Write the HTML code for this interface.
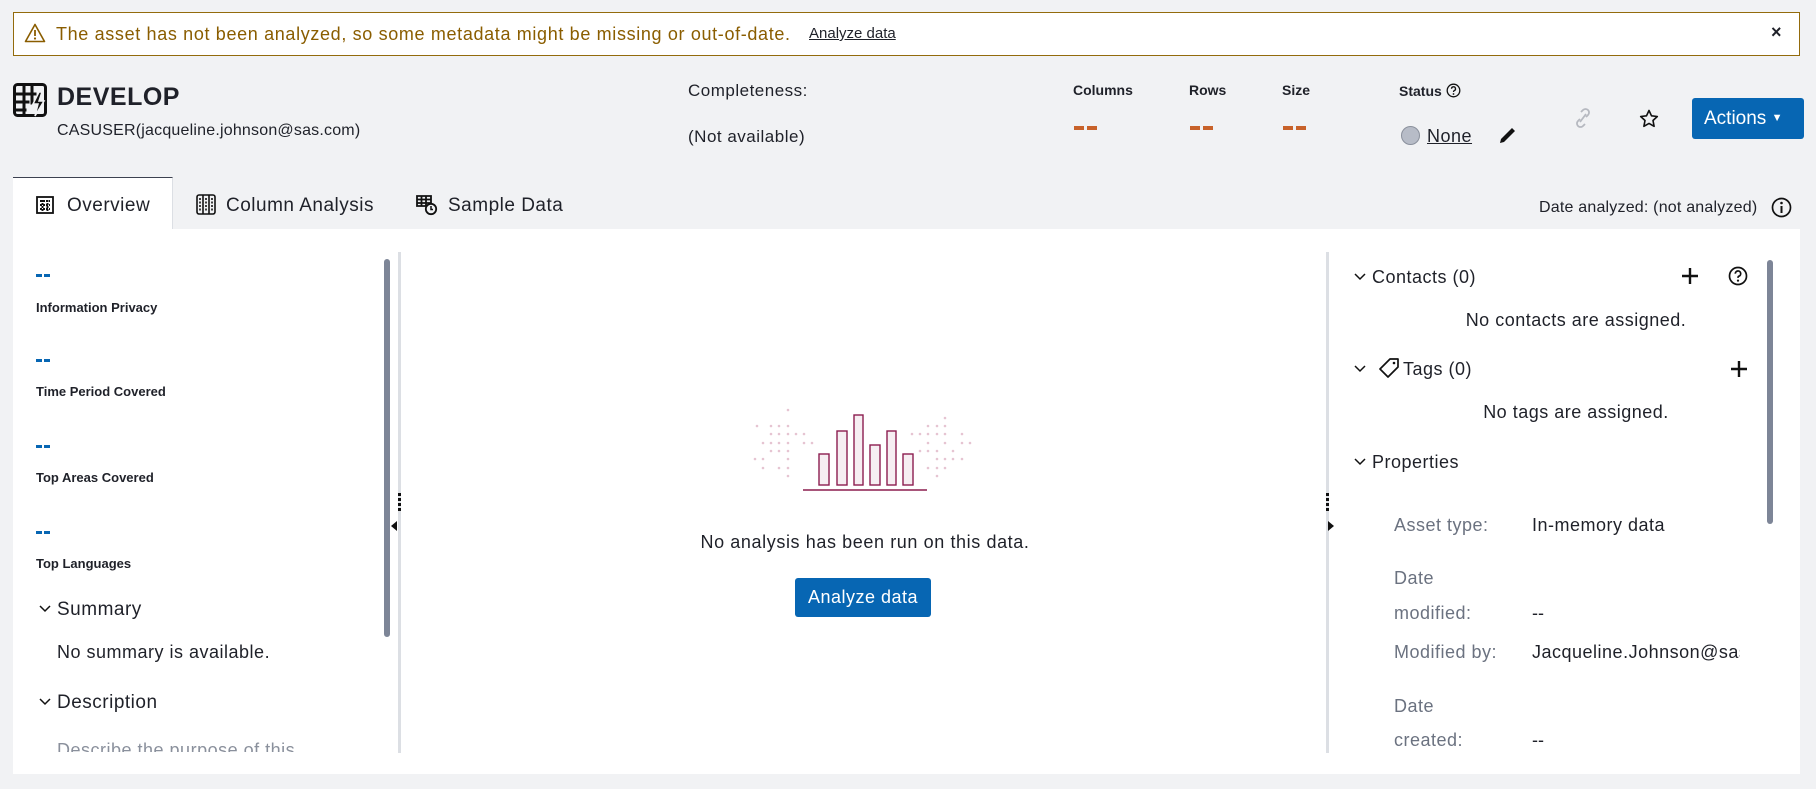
<!DOCTYPE html>
<html><head><meta charset="utf-8"><style>
*{margin:0;padding:0;box-sizing:border-box}
body{width:1816px;height:789px;background:#f1f2f4;font-family:"Liberation Sans",sans-serif;color:#1f2129;position:relative;overflow:hidden}
.a{position:absolute;white-space:nowrap}
.t{letter-spacing:0.5px}
.dash{position:absolute;height:4px}
.dash i{position:absolute;top:0;width:10px;height:4px}
</style></head><body>
<!-- banner -->
<div class="a" style="left:13px;top:12px;width:1787px;height:44px;background:#fff;border:1px solid #936b0c"></div>
<svg class="a" style="left:24px;top:23px" width="22" height="20" viewBox="0 0 22 20"><path d="M11 1.5L20.5 18.5H1.5Z" fill="none" stroke="#8a5d00" stroke-width="1.6" stroke-linejoin="round"/><path d="M11 7v6" stroke="#8a5d00" stroke-width="1.8"/><circle cx="11" cy="15.5" r="1.1" fill="#8a5d00"/></svg>
<div class="a" style="left:56px;top:24px;font-size:18px;letter-spacing:0.65px;color:#8a5d00">The asset has not been analyzed, so some metadata might be missing or out-of-date.</div>
<div class="a" style="left:809px;top:25px;font-size:15px;color:#1f2129;text-decoration:underline">Analyze data</div>
<div class="a" style="left:1771px;top:22px;font-size:18px;font-weight:bold">×</div>
<!-- header -->
<svg class="a" style="left:13px;top:83px" width="34" height="34" viewBox="0 0 34 34"><rect x="1.5" y="1.5" width="31" height="31" rx="3" fill="none" stroke="#111" stroke-width="3"/><path d="M1.5 11h22M1.5 19h15M1.5 27h12M11 1.5v31M19 1.5v20" stroke="#111" stroke-width="3"/><path d="M26 9l-6 12h5l-3 12 9-15h-5l3-9z" fill="#111" stroke="#f1f2f4" stroke-width="1.5"/></svg>
<div class="a" style="left:57px;top:83px;font-size:25px;font-weight:bold;letter-spacing:0.5px">DEVELOP</div>
<div class="a" style="left:57px;top:122px;font-size:16px;letter-spacing:0.2px">CASUSER(jacqueline.johnson@sas.com)</div>
<div class="a t" style="left:688px;top:81px;font-size:17px">Completeness:</div>
<div class="a t" style="left:688px;top:127px;font-size:17px">(Not available)</div>
<div class="a" style="left:1073px;top:82px;font-size:14px;font-weight:bold">Columns</div>
<div class="a" style="left:1189px;top:82px;font-size:14px;font-weight:bold">Rows</div>
<div class="a" style="left:1282px;top:82px;font-size:14px;font-weight:bold">Size</div>
<div class="dash" style="left:1074px;top:126px"><i style="left:0;background:#c8622a"></i><i style="left:13px;background:#c8622a"></i></div>
<div class="dash" style="left:1190px;top:126px"><i style="left:0;background:#c8622a"></i><i style="left:13px;background:#c8622a"></i></div>
<div class="dash" style="left:1283px;top:126px"><i style="left:0;background:#c8622a"></i><i style="left:13px;background:#c8622a"></i></div>
<div class="a" style="left:1399px;top:83px;font-size:14px;font-weight:bold">Status</div>
<svg class="a" style="left:1446px;top:83px" width="15" height="15" viewBox="0 0 15 15"><circle cx="7.5" cy="7.5" r="6.3" fill="none" stroke="#111" stroke-width="1.3"/><path d="M5.5 5.8a2 2 0 1 1 2.6 1.9c-.5.2-.6.6-.6 1.3" fill="none" stroke="#111" stroke-width="1.3"/><circle cx="7.5" cy="11" r=".9" fill="#111"/></svg>
<div class="a" style="left:1401px;top:126px;width:19px;height:19px;border-radius:50%;background:#b7bcc7;border:1px solid #8a909c"></div>
<div class="a t" style="left:1427px;top:126px;font-size:18px;text-decoration:underline">None</div>
<svg class="a" style="left:1497px;top:126px" width="20" height="20" viewBox="0 0 20 20"><path d="M3 17l1-4 9-9 3 3-9 9z M13 4l2-2 3 3-2 2" fill="#111"/></svg>
<svg class="a" style="left:1572px;top:106px" width="22" height="24" viewBox="0 0 22 24"><path d="M9 6l2-2a3.5 3.5 0 0 1 5 5l-2 2M13 18l-2 2a3.5 3.5 0 0 1-5-5l2-2M8 16l6-8" fill="none" stroke="#b6b9c0" stroke-width="1.8"/></svg>
<svg class="a" style="left:1639px;top:109px" width="20" height="19" viewBox="0 0 20 19"><path d="M10 1.5l2.5 5.3 5.8.7-4.3 4 1.1 5.8L10 14.4l-5.1 2.9L6 11.5 1.7 7.5l5.8-.7z" fill="none" stroke="#111" stroke-width="1.6" stroke-linejoin="round"/></svg>
<div class="a" style="left:1692px;top:98px;width:112px;height:41px;background:#0766b3;border-radius:3px;color:#fff;font-size:19px;line-height:41px;padding-left:12px">Actions <span style="font-size:11px;vertical-align:3px">▼</span></div>
<!-- tabs -->
<div class="a" style="left:13px;top:177px;width:160px;height:53px;background:#fff;border-top:1px solid #3c4150;border-right:1px solid #dcdfe4"></div>
<svg class="a" style="left:36px;top:196px" width="18" height="18" viewBox="0 0 18 18"><rect x="1" y="1" width="16" height="16" fill="none" stroke="#111" stroke-width="1.8"/><path d="M4 5h10M4 9h10M4 13h10M6.5 4v11M11.5 4v11" stroke="#111" stroke-width="2" stroke-dasharray="2 1"/></svg>
<div class="a t" style="left:67px;top:195px;font-size:19px">Overview</div>
<svg class="a" style="left:196px;top:194px" width="20" height="21" viewBox="0 0 20 21"><rect x="1" y="1" width="18" height="19" rx="2" fill="none" stroke="#111" stroke-width="1.6"/><path d="M7 1v19M13 1v19" stroke="#111" stroke-width="1.6"/><path d="M10 4v13M4 4v13M16 4v13" stroke="#111" stroke-width="1.6" stroke-dasharray="2 1.5"/></svg>
<div class="a t" style="left:226px;top:195px;font-size:19px">Column Analysis</div>
<svg class="a" style="left:416px;top:194px" width="22" height="22" viewBox="0 0 22 22"><path d="M1 2h14v10H1z M1 5.5h14M1 9h14M5.5 2v10M10 2v10" fill="none" stroke="#111" stroke-width="1.8"/><circle cx="15" cy="15" r="5.2" fill="#f1f2f4" stroke="#111" stroke-width="1.8"/><path d="M15 12v3.5h2" fill="none" stroke="#111" stroke-width="1.5"/></svg>
<div class="a t" style="left:448px;top:195px;font-size:19px">Sample Data</div>
<div class="a" style="left:1539px;top:199px;font-size:16px;letter-spacing:0.2px">Date analyzed: (not analyzed)</div>
<svg class="a" style="left:1771px;top:197px" width="21" height="21" viewBox="0 0 21 21"><circle cx="10.5" cy="10.5" r="9" fill="none" stroke="#111" stroke-width="1.7"/><circle cx="10.5" cy="6" r="1.3" fill="#111"/><path d="M10.5 9v7" stroke="#111" stroke-width="2"/></svg>
<!-- main panel -->
<div class="a" style="left:13px;top:229px;width:1787px;height:545px;background:#fff"></div>
<!-- left -->
<div class="a" style="left:384px;top:259px;width:6px;height:378px;background:#7d8597;border-radius:3px"></div>
<div class="a" style="left:398px;top:252px;width:3px;height:501px;background:#dcdfe4"></div>
<div class="a" style="left:398px;top:493px;width:3px;height:18px;background:repeating-linear-gradient(#111 0 3px,transparent 3px 5px)"></div>
<div class="a" style="left:391px;top:521px;width:0;height:0;border-top:5px solid transparent;border-bottom:5px solid transparent;border-right:6px solid #111"></div>
<div class="dash" style="left:36px;top:274px"><i style="left:0;background:#0766b3;width:6px;height:3px"></i><i style="left:8px;background:#0766b3;width:6px;height:3px"></i></div>
<div class="a" style="left:36px;top:300px;font-size:13px;font-weight:bold">Information Privacy</div>
<div class="dash" style="left:36px;top:359px"><i style="left:0;background:#0766b3;width:6px;height:3px"></i><i style="left:8px;background:#0766b3;width:6px;height:3px"></i></div>
<div class="a" style="left:36px;top:384px;font-size:13px;font-weight:bold">Time Period Covered</div>
<div class="dash" style="left:36px;top:445px"><i style="left:0;background:#0766b3;width:6px;height:3px"></i><i style="left:8px;background:#0766b3;width:6px;height:3px"></i></div>
<div class="a" style="left:36px;top:470px;font-size:13px;font-weight:bold">Top Areas Covered</div>
<div class="dash" style="left:36px;top:531px"><i style="left:0;background:#0766b3;width:6px;height:3px"></i><i style="left:8px;background:#0766b3;width:6px;height:3px"></i></div>
<div class="a" style="left:36px;top:556px;font-size:13px;font-weight:bold">Top Languages</div>
<svg class="a" style="left:39px;top:605px" width="12" height="8" viewBox="0 0 12 8"><path d="M1 1l5 5 5-5" fill="none" stroke="#111" stroke-width="1.5"/></svg>
<div class="a t" style="left:57px;top:599px;font-size:19px">Summary</div>
<div class="a t" style="left:57px;top:642px;font-size:18px">No summary is available.</div>
<svg class="a" style="left:39px;top:698px" width="12" height="8" viewBox="0 0 12 8"><path d="M1 1l5 5 5-5" fill="none" stroke="#111" stroke-width="1.5"/></svg>
<div class="a t" style="left:57px;top:692px;font-size:19px">Description</div>
<div class="a t" style="left:57px;top:740px;height:12px;overflow:hidden;font-size:18px;color:#8a909c">Describe the purpose of this</div>
<!-- center -->
<svg class="a" style="left:750px;top:405px" width="230" height="90" viewBox="750 405 230 90">
<g fill="#e6c4d2">
<circle cx="788" cy="410" r="1.3"/><circle cx="757" cy="426" r="1.3"/><circle cx="771" cy="426" r="1.3"/><circle cx="779" cy="426" r="1.3"/><circle cx="788" cy="426" r="1.3"/>
<circle cx="771" cy="434" r="1.3"/><circle cx="779" cy="434" r="1.3"/><circle cx="788" cy="434" r="1.3"/><circle cx="796" cy="434" r="1.3"/><circle cx="804" cy="434" r="1.3"/>
<circle cx="763" cy="443" r="1.3"/><circle cx="771" cy="443" r="1.3"/><circle cx="779" cy="443" r="1.3"/><circle cx="788" cy="443" r="1.3"/><circle cx="804" cy="443" r="1.3"/><circle cx="812" cy="443" r="1.3"/>
<circle cx="771" cy="451" r="1.3"/><circle cx="779" cy="451" r="1.3"/><circle cx="788" cy="451" r="1.3"/>
<circle cx="755" cy="459" r="1.3"/><circle cx="763" cy="459" r="1.3"/><circle cx="788" cy="459" r="1.3"/>
<circle cx="763" cy="468" r="1.3"/><circle cx="779" cy="468" r="1.3"/><circle cx="788" cy="468" r="1.3"/><circle cx="788" cy="476" r="1.3"/>
<circle cx="945" cy="418" r="1.3"/><circle cx="928" cy="426" r="1.3"/><circle cx="937" cy="426" r="1.3"/><circle cx="945" cy="426" r="1.3"/>
<circle cx="912" cy="434" r="1.3"/><circle cx="920" cy="434" r="1.3"/><circle cx="928" cy="434" r="1.3"/><circle cx="937" cy="434" r="1.3"/><circle cx="945" cy="434" r="1.3"/><circle cx="962" cy="434" r="1.3"/>
<circle cx="928" cy="443" r="1.3"/><circle cx="945" cy="443" r="1.3"/><circle cx="962" cy="443" r="1.3"/><circle cx="970" cy="443" r="1.3"/>
<circle cx="920" cy="451" r="1.3"/><circle cx="928" cy="451" r="1.3"/><circle cx="937" cy="451" r="1.3"/><circle cx="953" cy="451" r="1.3"/>
<circle cx="937" cy="459" r="1.3"/><circle cx="945" cy="459" r="1.3"/><circle cx="953" cy="459" r="1.3"/><circle cx="962" cy="459" r="1.3"/>
<circle cx="928" cy="468" r="1.3"/><circle cx="937" cy="468" r="1.3"/><circle cx="945" cy="468" r="1.3"/><circle cx="937" cy="476" r="1.3"/>
</g>
<g fill="#f6eef2" stroke="#8c1d4f" stroke-width="1.4">
<rect x="819" y="454" width="10" height="31"/><rect x="837" y="431" width="10" height="54"/><rect x="854" y="415" width="9" height="70"/><rect x="870" y="445" width="10" height="40"/><rect x="887" y="431" width="9" height="54"/><rect x="903" y="454" width="10" height="31"/>
</g>
<path d="M803 490h124" stroke="#8c1d4f" stroke-width="1.5"/>
</svg>
<div class="a" style="left:600px;top:532px;width:530px;text-align:center;font-size:18px;letter-spacing:0.6px">No analysis has been run on this data.</div>
<div class="a t" style="left:795px;top:578px;width:136px;height:39px;background:#0766b3;border-radius:3px;color:#fff;font-size:18px;line-height:39px;text-align:center">Analyze data</div>
<!-- right -->
<div class="a" style="left:1326px;top:252px;width:3px;height:501px;background:#dcdfe4"></div>
<div class="a" style="left:1326px;top:493px;width:3px;height:18px;background:repeating-linear-gradient(#111 0 3px,transparent 3px 5px)"></div>
<div class="a" style="left:1328px;top:521px;width:0;height:0;border-top:5px solid transparent;border-bottom:5px solid transparent;border-left:6px solid #111"></div>
<div class="a" style="left:1767px;top:260px;width:6px;height:264px;background:#7d8597;border-radius:3px"></div>
<svg class="a" style="left:1354px;top:273px" width="12" height="8" viewBox="0 0 12 8"><path d="M1 1l5 5 5-5" fill="none" stroke="#111" stroke-width="1.5"/></svg>
<div class="a t" style="left:1372px;top:267px;font-size:18px">Contacts (0)</div>
<svg class="a" style="left:1681px;top:267px" width="18" height="18" viewBox="0 0 18 18"><path d="M9 1v16M1 9h16" stroke="#111" stroke-width="2.4"/></svg>
<svg class="a" style="left:1728px;top:266px" width="20" height="20" viewBox="0 0 20 20"><circle cx="10" cy="10" r="8.5" fill="none" stroke="#111" stroke-width="1.7"/><path d="M7.3 7.7a2.7 2.7 0 1 1 3.6 2.5c-.7.3-.9.8-.9 1.7" fill="none" stroke="#111" stroke-width="1.7"/><circle cx="10" cy="14.6" r="1.1" fill="#111"/></svg>
<div class="a t" style="left:1328px;top:310px;width:496px;text-align:center;font-size:18px">No contacts are assigned.</div>
<svg class="a" style="left:1354px;top:365px" width="12" height="8" viewBox="0 0 12 8"><path d="M1 1l5 5 5-5" fill="none" stroke="#111" stroke-width="1.5"/></svg>
<svg class="a" style="left:1378px;top:357px" width="22" height="22" viewBox="0 0 22 22"><path d="M12 2h8v8l-10 10-8-8z" fill="none" stroke="#111" stroke-width="1.7" stroke-linejoin="round"/><circle cx="16" cy="6" r="1.3" fill="#111"/></svg>
<div class="a t" style="left:1403px;top:359px;font-size:18px">Tags (0)</div>
<svg class="a" style="left:1730px;top:360px" width="18" height="18" viewBox="0 0 18 18"><path d="M9 1v16M1 9h16" stroke="#111" stroke-width="2.4"/></svg>
<div class="a t" style="left:1328px;top:402px;width:496px;text-align:center;font-size:18px">No tags are assigned.</div>
<svg class="a" style="left:1354px;top:458px" width="12" height="8" viewBox="0 0 12 8"><path d="M1 1l5 5 5-5" fill="none" stroke="#111" stroke-width="1.5"/></svg>
<div class="a t" style="left:1372px;top:452px;font-size:18px">Properties</div>
<div class="a t" style="left:1394px;top:515px;font-size:18px;color:#6b7280">Asset type:</div>
<div class="a t" style="left:1532px;top:515px;font-size:18px">In-memory data</div>
<div class="a t" style="left:1394px;top:568px;font-size:18px;color:#6b7280">Date</div>
<div class="a t" style="left:1394px;top:603px;font-size:18px;color:#6b7280">modified:</div>
<div class="a" style="left:1532px;top:603px;font-size:18px">--</div>
<div class="a t" style="left:1394px;top:642px;font-size:18px;color:#6b7280">Modified by:</div>
<div class="a t" style="left:1532px;top:642px;width:208px;overflow:hidden;font-size:18px">Jacqueline.Johnson@sas.com</div>
<div class="a t" style="left:1394px;top:696px;font-size:18px;color:#6b7280">Date</div>
<div class="a t" style="left:1394px;top:730px;height:23px;overflow:hidden;font-size:18px;color:#6b7280">created:</div>
<div class="a" style="left:1532px;top:730px;font-size:18px">--</div>
</body></html>
